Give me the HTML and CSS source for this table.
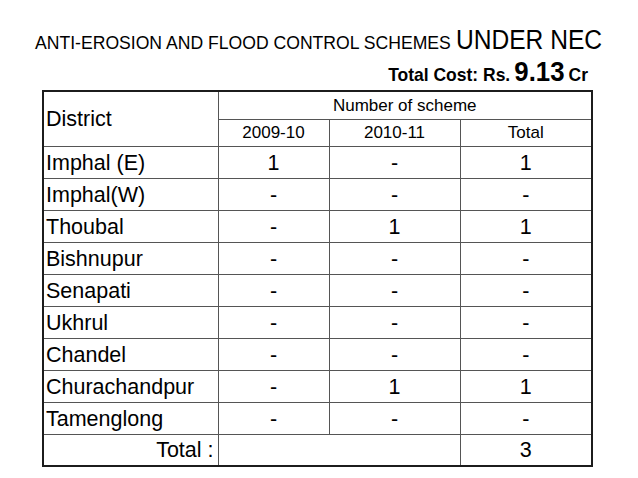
FILE: index.html
```html
<!DOCTYPE html>
<html>
<head>
<meta charset="utf-8">
<link rel="stylesheet" href="styles.css">
</head>
<body>
<div class="page">
  <h1 class="title"><span class="t-small">ANTI-EROSION AND FLOOD CONTROL SCHEMES</span><span class="t-big">UNDER NEC</span></h1>
  <p class="cost"><span class="cost-txt">Total Cost: Rs.</span> <span class="cost-num">9.13</span> <span class="cost-txt">Cr</span></p>
  <table class="grid">
    <colgroup>
      <col class="c-dist"><col class="c-a"><col class="c-b"><col class="c-c">
    </colgroup>
    <thead>
      <tr class="h1">
        <th rowspan="2" class="dist head-dist">District</th>
        <th colspan="3" class="hnum">Number of scheme</th>
      </tr>
      <tr class="h2">
        <th class="hyr">2009-10</th>
        <th class="hyr">2010-11</th>
        <th class="hyr">Total</th>
      </tr>
    </thead>
    <tbody>
      <tr><td class="dist">Imphal (E)</td><td>1</td><td>-</td><td>1</td></tr>
      <tr><td class="dist">Imphal(W)</td><td>-</td><td>-</td><td>-</td></tr>
      <tr><td class="dist">Thoubal</td><td>-</td><td>1</td><td>1</td></tr>
      <tr><td class="dist">Bishnupur</td><td>-</td><td>-</td><td>-</td></tr>
      <tr><td class="dist">Senapati</td><td>-</td><td>-</td><td>-</td></tr>
      <tr><td class="dist">Ukhrul</td><td>-</td><td>-</td><td>-</td></tr>
      <tr><td class="dist">Chandel</td><td>-</td><td>-</td><td>-</td></tr>
      <tr><td class="dist">Churachandpur</td><td>-</td><td>1</td><td>1</td></tr>
      <tr><td class="dist">Tamenglong</td><td>-</td><td>-</td><td>-</td></tr>
      <tr class="last"><td class="tot-label">Total :</td><td colspan="2"></td><td>3</td></tr>
    </tbody>
  </table>
</div>
</body>
</html>
```
FILE: styles.css
```css
html, body {
  margin: 0;
  padding: 0;
  background: #fff;
}
body {
  font-family: "Liberation Sans", Arial, sans-serif;
  color: #000;
}
.page {
  width: 638px;
  height: 478px;
  padding-top: 24px;
  box-sizing: border-box;
}
.title {
  margin: 0 0 0 35px;
  font-weight: normal;
  line-height: 28px;
  height: 28px;
  white-space: nowrap;
}
.t-small {
  font-size: 17.6px;
}
.t-big {
  display: inline-block;
  margin-left: 5px;
  font-size: 27px;
  transform: scaleX(0.91);
  transform-origin: left center;
}
.cost {
  margin: 0;
  padding-top: 3px;
  padding-right: 50px;
  text-align: right;
  font-weight: bold;
  line-height: 34px;
  height: 35px;
  white-space: nowrap;
  transform: scaleX(0.92);
  transform-origin: 588px center;
}
.cost-txt {
  font-size: 19px;
}
.cost-num {
  font-size: 28px;
}
.grid {
  margin-left: 42px;
  width: 549px;
  table-layout: fixed;
  border-collapse: collapse;
  border: 2px solid #1c1c1c;
}
.c-dist { width: 175px; }
.c-a { width: 111px; }
.c-b { width: 131px; }
.c-c { width: 132px; }
.grid th, .grid td {
  border: 1px solid #555;
  padding: 0;
  text-align: center;
  font-weight: normal;
  white-space: nowrap;
}
.grid tbody td {
  height: 31px;
  font-size: 21.5px;
  line-height: 24px;
}
.grid tbody tr.last td {
  height: 30px;
}
.h1 th { height: 27px; }
.h2 th { height: 26px; }
.hnum, .hyr {
  font-size: 17px;
  line-height: 20px;
}
.grid .dist {
  text-align: left;
  padding-left: 2px;
}
.head-dist {
  font-size: 21.5px;
  line-height: 24px;
}
.grid .tot-label {
  text-align: right;
  padding-right: 4px;
}
```
